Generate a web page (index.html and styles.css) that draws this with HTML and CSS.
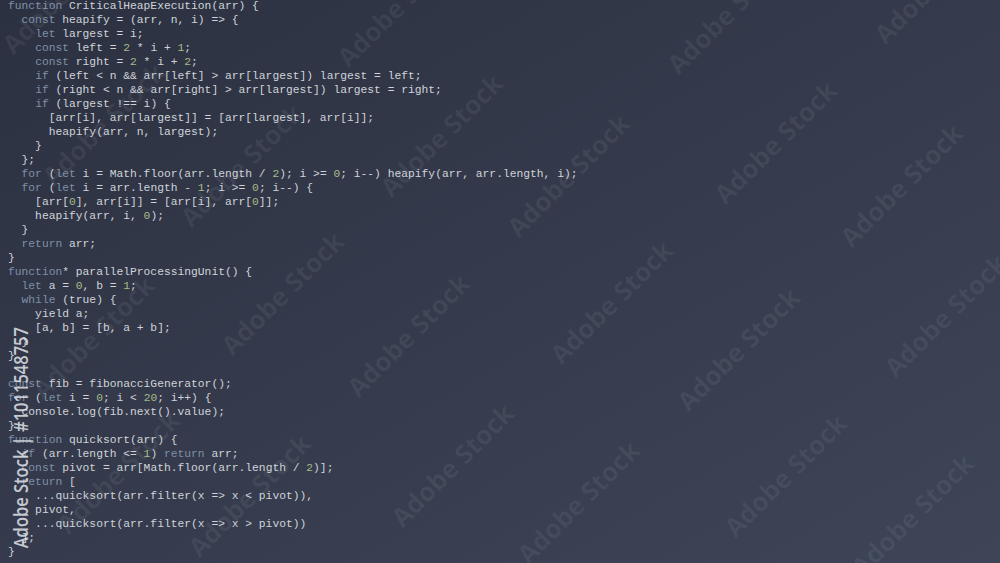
FILE: index.html
```html
<!DOCTYPE html>
<html lang="en">
<head>
  <meta charset="UTF-8" />
  <meta name="viewport" content="width=device-width, initial-scale=1.0"/>
  <title>Code Background</title>
  <link rel="stylesheet" href="styles.css">
</head>
<body>

  <main class="screen">
<pre class="code"><span class="k">function</span> CriticalHeapExecution(arr) {
  <span class="k">const</span> heapify = (arr, n, i) => {
    <span class="k">let</span> largest = i;
    <span class="k">const</span> left = <span class="n">2</span> * i + <span class="n">1</span>;
    <span class="k">const</span> right = <span class="n">2</span> * i + <span class="n">2</span>;
    <span class="k">if</span> (left &lt; n &amp;&amp; arr[left] &gt; arr[largest]) largest = left;
    <span class="k">if</span> (right &lt; n &amp;&amp; arr[right] &gt; arr[largest]) largest = right;
    <span class="k">if</span> (largest !== i) {
      [arr[i], arr[largest]] = [arr[largest], arr[i]];
      heapify(arr, n, largest);
    }
  };
  <span class="k">for</span> (<span class="k">let</span> i = Math.floor(arr.length / <span class="n">2</span>); i &gt;= <span class="n">0</span>; i--) heapify(arr, arr.length, i);
  <span class="k">for</span> (<span class="k">let</span> i = arr.length - <span class="n">1</span>; i &gt;= <span class="n">0</span>; i--) {
    [arr[<span class="n">0</span>], arr[i]] = [arr[i], arr[<span class="n">0</span>]];
    heapify(arr, i, <span class="n">0</span>);
  }
  <span class="k">return</span> arr;
}
<span class="k">function</span>* parallelProcessingUnit() {
  <span class="k">let</span> a = <span class="n">0</span>, b = <span class="n">1</span>;
  <span class="k">while</span> (true) {
    yield a;
    [a, b] = [b, a + b];
  }
}

<span class="k">const</span> fib = fibonacciGenerator();
<span class="k">for</span> (<span class="k">let</span> i = <span class="n">0</span>; i &lt; <span class="n">20</span>; i++) {
  console.log(fib.next().value);
}
<span class="k">function</span> quicksort(arr) {
  <span class="k">if</span> (arr.length &lt;= <span class="n">1</span>) <span class="k">return</span> arr;
  <span class="k">const</span> pivot = arr[Math.floor(arr.length / <span class="n">2</span>)];
  <span class="k">return</span> [
    ...quicksort(arr.filter(x => x &lt; pivot)),
    pivot,
    ...quicksort(arr.filter(x => x &gt; pivot))
  ];
}</pre>

    <!-- watermark layer -->
    <div class="watermarks" id="watermarks"></div>
    <div class="stock-id">Adobe Stock | #1011548757</div>
  </main>

  <script>
    // centres of the diagonal "Adobe Stock" marks
    const marks = [
      [63, -8], [398, 5], [728, 12], [935, -18],
      [103, 124], [441, 135], [241, 165], [568, 175], [775, 142], [901, 185],
      [282, 293], [93, 337], [408, 335], [611, 302], [738, 349], [945, 315],
      [118, 472], [249, 495], [452, 465], [578, 502], [785, 475], [912, 515]
    ];
    const layer = document.getElementById('watermarks');
    marks.forEach(([x, y]) => {
      const el = document.createElement('span');
      el.className = 'mark';
      el.textContent = 'Adobe Stock';
      el.style.left = x + 'px';
      el.style.top = y + 'px';
      layer.appendChild(el);
    });
  </script>
</body>
</html>
```

FILE: styles.css
```css
* {
  box-sizing: border-box;
  margin: 0;
  padding: 0;
}

html, body {
  width: 100%;
  height: 100%;
  overflow: hidden;
}

body {
  background: linear-gradient(to bottom right, #2c3141 0%, #353b4c 50%, #3d4557 100%);
  color: #cfd3d9;
}

.screen {
  position: relative;
  width: 1000px;
  height: 563px;
  overflow: hidden;
}

.code {
  font-family: 'Liberation Mono', 'DejaVu Sans Mono', monospace;
  font-size: 11.3px;
  line-height: 14px;
  padding-left: 8px;
  margin-top: -1px;
  color: #cfd3d9;
}

.code .k { color: #7f8fa7; }
.code .n { color: #a9bb85; }

.watermarks {
  position: absolute;
  inset: 0;
  pointer-events: none;
}

.mark {
  position: absolute;
  transform: translate(-50%, -50%) rotate(-45deg);
  font-family: 'Open Sans', 'Liberation Sans', sans-serif;
  font-weight: 700;
  font-size: 26px;
  line-height: 1;
  white-space: nowrap;
  color: rgba(255, 255, 255, 0.06);
}

.stock-id {
  position: absolute;
  left: 11px;
  bottom: 15px;
  writing-mode: vertical-rl;
  transform: rotate(180deg) scale(1.2, 1);
  font-family: 'Open Sans', 'Liberation Sans', sans-serif;
  font-weight: 600;
  font-size: 16.5px;
  line-height: 20px;
  white-space: nowrap;
  color: rgba(225, 228, 234, 0.85);
}
```
